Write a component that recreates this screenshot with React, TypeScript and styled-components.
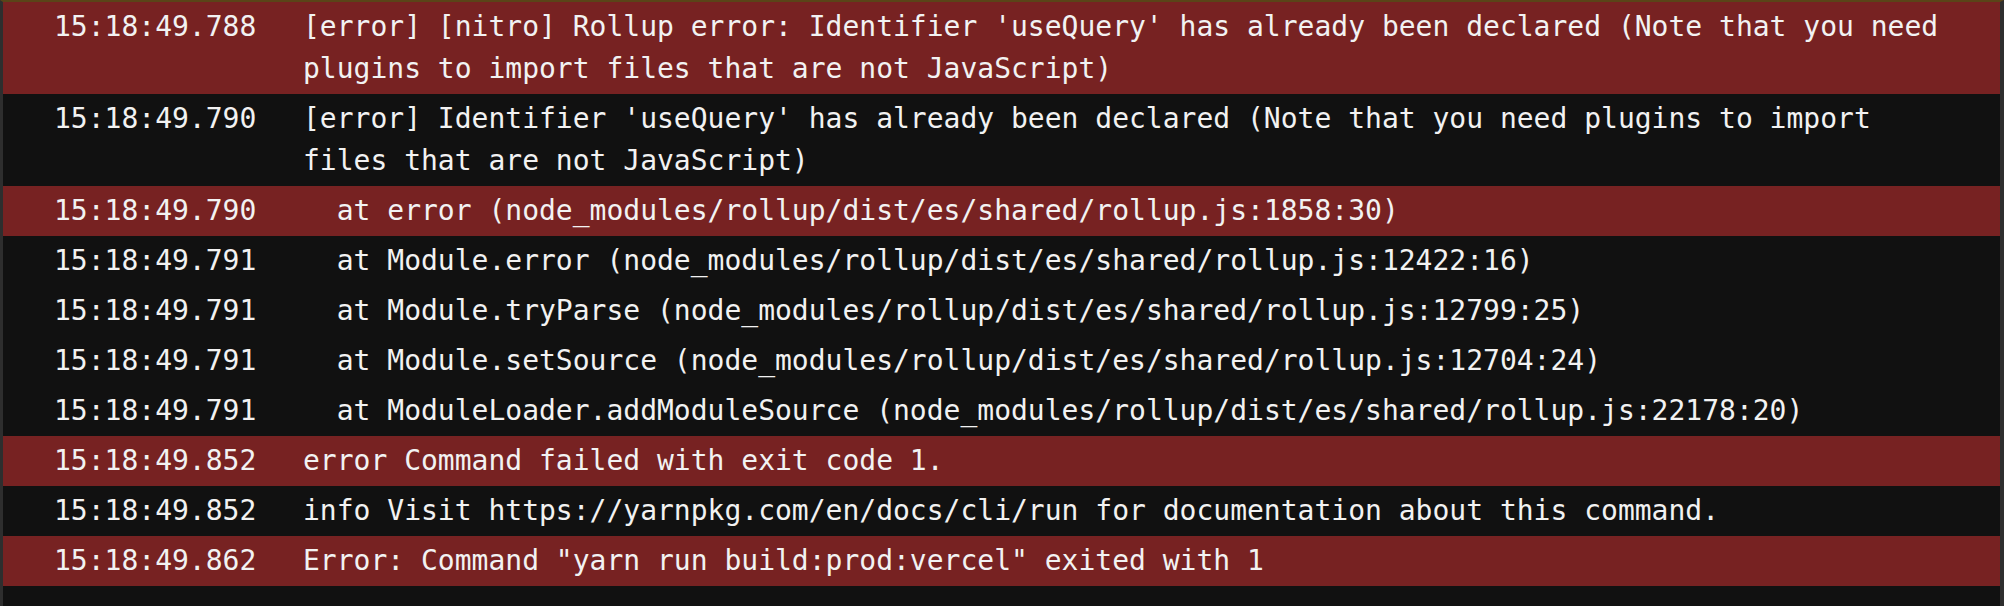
import React from "react";
import styled, { createGlobalStyle } from "styled-components";

const Global = createGlobalStyle`
  html, body { margin: 0; padding: 0; background: #111111; }
  body { width: 2004px; height: 606px; overflow: hidden; }
`;

const Frame = styled.div`
  width: 2004px;
  height: 606px;
  box-sizing: border-box;
  background: #111111;
  border-left: 3px solid #2e2e2e;
  border-right: 4px solid #2e2e2e;
  border-top: 2px solid #5a4418;
  padding-bottom: 20px;
  overflow: hidden;
`;

const Row = styled.div<{ $error?: boolean }>`
  display: grid;
  grid-template-columns: 202px 1fr;
  column-gap: 47px;
  padding: 4px 0 4px 51px;
  background: ${(p) => (p.$error ? "#772222" : "transparent")};
  font-family: "DejaVu Sans Mono", "Liberation Mono", monospace;
  font-size: 28px;
  line-height: 42px;
  color: #f2f2f2;
`;

const Time = styled.span`
  white-space: nowrap;
`;

const Message = styled.span`
  white-space: pre-wrap;
  padding-right: 40px;
`;

const rows: { t: string; m: string; e?: boolean }[] = [
  {
    t: "15:18:49.788",
    m: "[error] [nitro] Rollup error: Identifier 'useQuery' has already been declared (Note that you need\nplugins to import files that are not JavaScript)",
    e: true,
  },
  {
    t: "15:18:49.790",
    m: "[error] Identifier 'useQuery' has already been declared (Note that you need plugins to import\nfiles that are not JavaScript)",
  },
  { t: "15:18:49.790", m: "  at error (node_modules/rollup/dist/es/shared/rollup.js:1858:30)", e: true },
  { t: "15:18:49.791", m: "  at Module.error (node_modules/rollup/dist/es/shared/rollup.js:12422:16)" },
  { t: "15:18:49.791", m: "  at Module.tryParse (node_modules/rollup/dist/es/shared/rollup.js:12799:25)" },
  { t: "15:18:49.791", m: "  at Module.setSource (node_modules/rollup/dist/es/shared/rollup.js:12704:24)" },
  {
    t: "15:18:49.791",
    m: "  at ModuleLoader.addModuleSource (node_modules/rollup/dist/es/shared/rollup.js:22178:20)",
  },
  { t: "15:18:49.852", m: "error Command failed with exit code 1.", e: true },
  {
    t: "15:18:49.852",
    m: "info Visit https://yarnpkg.com/en/docs/cli/run for documentation about this command.",
  },
  { t: "15:18:49.862", m: 'Error: Command "yarn run build:prod:vercel" exited with 1', e: true },
];

export default function App() {
  return (
    <>
      <Global />
      <Frame>
        {rows.map((r, i) => (
          <Row key={i} $error={r.e}>
            <Time>{r.t}</Time>
            <Message>{r.m}</Message>
          </Row>
        ))}
      </Frame>
    </>
  );
}
